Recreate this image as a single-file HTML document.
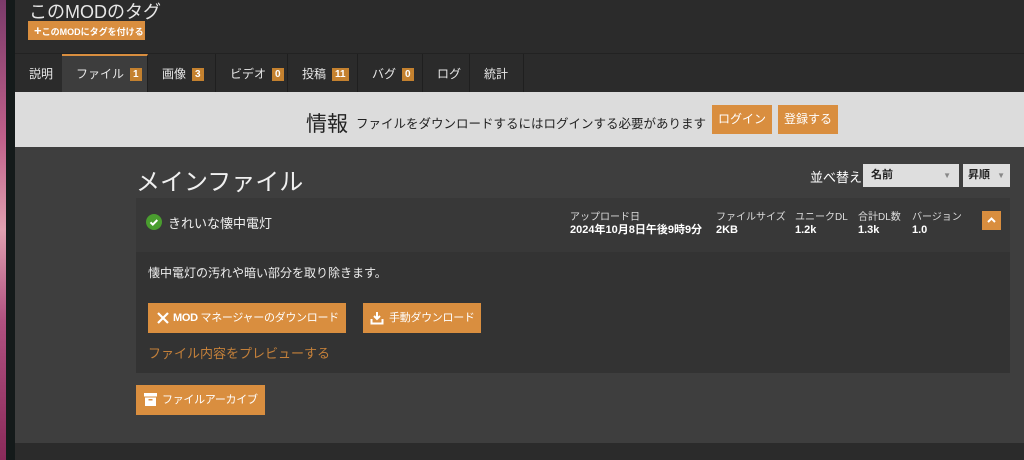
<!DOCTYPE html>
<html><head><meta charset="utf-8"><style>
*{box-sizing:border-box;margin:0;padding:0;white-space:nowrap}
body{width:1024px;height:460px;overflow:hidden;background:#2b2b2b;font-family:"Liberation Sans","Noto Sans CJK JP",sans-serif;position:relative;color:#eee}
.a{position:absolute}
.or{background:#d98e3f;color:#fff}
.tab{position:absolute;top:54px;height:38px;font-size:12px;line-height:40px;color:#e8e8e8;border-right:1px solid #1f1f1f;padding-left:14px}
.bd{display:inline-block;background:#c4812f;color:#fff;font-size:10px;font-weight:bold;line-height:13px;padding:0 3px;margin-left:6px;vertical-align:1px}
.lb{font-size:10px;color:#ddd;line-height:12px}
.vl{font-size:11px;font-weight:bold;color:#fff;line-height:13px}
.btn{position:absolute;height:30px;font-size:11px;letter-spacing:-0.3px;line-height:30px;overflow:hidden}
</style></head><body>
<div class="a" style="left:0;top:0;width:6px;height:460px;background:linear-gradient(#7a3a6a,#c0608a 30%,#e0a0b0 50%,#b05080 70%,#8a2a5a)"></div>
<div class="a" style="left:6px;top:0;width:9px;height:460px;background:#141a1a"></div>
<div class="a" style="left:15px;top:0;width:1009px;height:53px;background:#2b2b2b"></div>
<div class="a" style="left:29px;top:-2px;font-size:18px;color:#e6e6e6">このMODのタグ</div>
<div class="a or" style="left:28px;top:21px;width:117px;height:19px;font-size:9px;font-weight:bold;line-height:19px;padding-left:6px"><span style="font-size:13px">+</span>このMODにタグを付ける</div>
<div class="a" style="left:15px;top:53px;width:1009px;height:1px;background:#222"></div>
<div class="tab" style="left:15px;width:48px">説明</div>
<div class="tab" style="left:62px;width:86px;background:#3d3d3d;border-top:2px solid #d98e3f;line-height:36px">ファイル<span class="bd">1</span></div>
<div class="tab" style="left:148px;width:68px">画像<span class="bd">3</span></div>
<div class="tab" style="left:216px;width:72px">ビデオ<span class="bd">0</span></div>
<div class="tab" style="left:288px;width:70px">投稿<span class="bd">11</span></div>
<div class="tab" style="left:358px;width:65px">バグ<span class="bd">0</span></div>
<div class="tab" style="left:423px;width:47px">ログ</div>
<div class="tab" style="left:470px;width:54px">統計</div>
<div class="a" style="left:15px;top:92px;width:1009px;height:55px;background:#dcdcdc"></div>
<div class="a" style="left:306px;top:108px;font-size:21px;color:#222">情報</div>
<div class="a" style="left:356px;top:113px;font-size:12.5px;color:#222">ファイルをダウンロードするにはログインする必要があります</div>
<div class="a or" style="left:712px;top:105px;width:60px;height:29px;font-size:12px;line-height:29px;text-align:center">ログイン</div>
<div class="a or" style="left:778px;top:105px;width:60px;height:29px;font-size:12px;line-height:29px;text-align:center">登録する</div>
<div class="a" style="left:15px;top:147px;width:1009px;height:296px;background:#3e3e3e"></div>
<div class="a" style="left:136px;top:162px;font-size:24px;color:#f0f0f0">メインファイル</div>
<div class="a" style="left:810px;top:167px;font-size:13px;color:#fff">並べ替え</div>
<div class="a" style="left:863px;top:164px;width:96px;height:23px;background:#dedede;color:#222;font-size:11px;font-weight:bold;line-height:23px;padding-left:8px">名前<span style="position:absolute;right:8px;color:#888;font-size:8px">▼</span></div>
<div class="a" style="left:963px;top:164px;width:47px;height:23px;background:#dedede;color:#222;font-size:11px;font-weight:bold;line-height:23px;padding-left:5px">昇順<span style="position:absolute;right:5px;color:#888;font-size:8px">▼</span></div>
<div class="a" style="left:136px;top:198px;width:874px;height:54px;background:#383838"></div>
<div class="a" style="left:136px;top:252px;width:874px;height:121px;background:#333"></div>
<div class="a" style="left:146px;top:214px;width:16px;height:16px;border-radius:50%;background:#4a9d2f"></div>
<svg class="a" style="left:146px;top:214px" width="16" height="16"><path d="M4.5 8.3l2.3 2.3 4.5-4.6" stroke="#fff" stroke-width="2" fill="none"/></svg>
<div class="a" style="left:168px;top:213px;font-size:13px;color:#eee">きれいな懐中電灯</div>
<div class="a" style="left:570px;top:212px"><div class="lb">アップロード日</div><div class="vl">2024年10月8日午後9時9分</div></div>
<div class="a" style="left:716px;top:212px"><div class="lb">ファイルサイズ</div><div class="vl">2KB</div></div>
<div class="a" style="left:795px;top:212px"><div class="lb">ユニークDL</div><div class="vl">1.2k</div></div>
<div class="a" style="left:858px;top:212px"><div class="lb">合計DL数</div><div class="vl">1.3k</div></div>
<div class="a" style="left:912px;top:212px"><div class="lb">バージョン</div><div class="vl">1.0</div></div>
<div class="a or" style="left:982px;top:211px;width:19px;height:19px"></div>
<svg class="a" style="left:982px;top:211px" width="19" height="19"><path d="M6 11l3.5-3.5L13 11" stroke="#fff" stroke-width="2" fill="none"/></svg>
<div class="a" style="left:148px;top:264px;font-size:12px;color:#eee">懐中電灯の汚れや暗い部分を取り除きます。</div>
<div class="btn or" style="left:148px;top:303px;width:198px;padding-left:25px"><b>MOD</b> マネージャーのダウンロード</div>
<svg class="a" style="left:156px;top:311px" width="14" height="14"><path d="M2 2l10 10M12 2L2 12" stroke="#fff" stroke-width="2.2"/></svg>
<div class="btn or" style="left:363px;top:303px;width:118px;padding-left:26px">手動ダウンロード</div>
<svg class="a" style="left:370px;top:311px" width="14" height="14"><path d="M7 1v7M4 5l3 3 3-3M1.5 8v4.5h11V8" stroke="#fff" stroke-width="2" fill="none"/></svg>
<div class="a" style="left:148px;top:343px;font-size:13px;color:#c4803a">ファイル内容をプレビューする</div>
<div class="btn or" style="left:136px;top:385px;width:129px;padding-left:26px">ファイルアーカイブ</div>
<svg class="a" style="left:144px;top:393px" width="13" height="13"><rect x="0" y="0" width="13" height="3.5" fill="#fff"/><rect x="1" y="4.5" width="11" height="8.5" fill="#fff"/><rect x="4.5" y="6" width="4" height="1.5" fill="#d98e3f"/></svg>
</body></html>
